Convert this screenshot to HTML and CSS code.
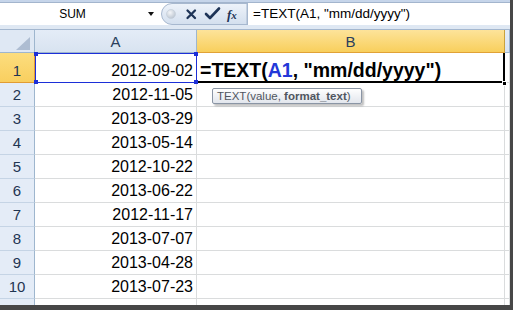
FILE: index.html
```html
<!DOCTYPE html>
<html>
<head>
<meta charset="utf-8">
<link rel="stylesheet" href="styles.css">
</head>
<body>
<div class="window">
  <div class="topstrip"></div>
  <div class="fbar">
    <div class="namebox"><span class="name">SUM</span><span class="arrow"></span></div>
    <div class="fbtns">
      <svg width="86" height="22" viewBox="0 0 86 22">
        <defs>
          <linearGradient id="bg" x1="0" y1="0" x2="0" y2="1">
            <stop offset="0" stop-color="#eef3fa"/>
            <stop offset="1" stop-color="#d3dfee"/>
          </linearGradient>
          <radialGradient id="dot" cx="0.4" cy="0.35" r="0.7">
            <stop offset="0" stop-color="#f4f6f9"/>
            <stop offset="1" stop-color="#b9c3cf"/>
          </radialGradient>
        </defs>
        <path d="M11 0.5 A10.5 10.5 0 0 0 11 21.5 L86 21.5 L86 0.5 Z" fill="url(#bg)" stroke="#a7b8cf" stroke-width="1"/>
        <circle cx="10" cy="11" r="4.5" fill="url(#dot)" stroke="#c3ccd8" stroke-width="0.6"/>
        <path d="M26.5 7.5 L34 15 M34 7.5 L26.5 15" stroke="#1e3457" stroke-width="2.3" stroke-linecap="round"/>
        <path d="M45 11 L49 15 L58 5.5" fill="none" stroke="#1e3457" stroke-width="2.6" stroke-linecap="round" stroke-linejoin="round"/>
        <text x="66" y="15.5" font-family="Liberation Serif, serif" font-style="italic" font-weight="bold" font-size="13" fill="#1e3457">f<tspan font-size="11">x</tspan></text>
      </svg>
    </div>
    <div class="finput">=TEXT(A1, "mm/dd/yyyy")</div>
  </div>
  <div class="gap"></div>
  <div class="sheet">
    <div class="corner"><span class="tri"></span></div>
    <div class="colhead">A</div>
    <div class="colhead sel">B</div>
    <div class="colhead"></div>

    <div class="rowhead sel">1</div>
    <div class="cell num">2012-09-02</div>
    <div class="cell edit">=TEXT(<span class="ref">A1</span>, "mm/dd/yyyy")</div>
    <div class="cell"></div>

    <div class="rowhead">2</div>
    <div class="cell num">2012-11-05</div>
    <div class="cell"></div>
    <div class="cell"></div>

    <div class="rowhead">3</div>
    <div class="cell num">2013-03-29</div>
    <div class="cell"></div>
    <div class="cell"></div>

    <div class="rowhead">4</div>
    <div class="cell num">2013-05-14</div>
    <div class="cell"></div>
    <div class="cell"></div>

    <div class="rowhead">5</div>
    <div class="cell num">2012-10-22</div>
    <div class="cell"></div>
    <div class="cell"></div>

    <div class="rowhead">6</div>
    <div class="cell num">2013-06-22</div>
    <div class="cell"></div>
    <div class="cell"></div>

    <div class="rowhead">7</div>
    <div class="cell num">2012-11-17</div>
    <div class="cell"></div>
    <div class="cell"></div>

    <div class="rowhead">8</div>
    <div class="cell num">2013-07-07</div>
    <div class="cell"></div>
    <div class="cell"></div>

    <div class="rowhead">9</div>
    <div class="cell num">2013-04-28</div>
    <div class="cell"></div>
    <div class="cell"></div>

    <div class="rowhead">10</div>
    <div class="cell num">2013-07-23</div>
    <div class="cell"></div>
    <div class="cell"></div>

    <div class="rowhead">11</div>
    <div class="cell num"></div>
    <div class="cell"></div>
    <div class="cell"></div>

    <div class="refbox">
      <span class="sq tl"></span><span class="sq tr"></span><span class="sq bl"></span><span class="sq br"></span>
    </div>
    <div class="handle"></div>
    <div class="tooltip">TEXT(value, <b>format_text</b>)</div>
  </div>
</div>
</body>
</html>
```

FILE: styles.css
```css
html, body {
  margin: 0;
  padding: 0;
}
body {
  background: #474747;
  width: 513px;
  height: 310px;
  overflow: hidden;
  font-family: "Liberation Sans", Arial, sans-serif;
}
.window {
  width: 510px;
  height: 305px;
  background: #ffffff;
  overflow: hidden;
  display: flex;
  flex-direction: column;
}
.topstrip {
  height: 2px;
  flex: 0 0 2px;
  background: #c6d5ea;
  border-bottom: 1px solid #a3b5cd;
}
.fbar {
  height: 22px;
  flex: 0 0 22px;
  display: flex;
  background: #dbe5f1;
}
.namebox {
  width: 161px;
  flex: 0 0 161px;
  background: #ffffff;
  display: flex;
  align-items: center;
}
.name {
  flex: 0 0 145px;
  text-align: center;
  font-size: 12px;
  color: #000;
}
.arrow {
  margin-left: 3px;
  width: 0;
  height: 0;
  border-left: 3.5px solid transparent;
  border-right: 3.5px solid transparent;
  border-top: 4px solid #111;
}
.fbtns {
  width: 86px;
  flex: 0 0 86px;
  background: #ffffff;
}
.fbtns svg {
  display: block;
}
.finput {
  flex: 1;
  background: #ffffff;
  border-left: 1px solid #a7b8cf;
  padding-left: 5px;
  font-size: 13.5px;
  line-height: 22px;
  color: #000;
  white-space: nowrap;
}
.gap {
  height: 4px;
  flex: 0 0 4px;
  background: #dfe8f3;
  border-top: 0;
  border-bottom: 1px solid #a4b7cf;
}
.sheet {
  position: relative;
  display: grid;
  grid-template-columns: 35px 162px 308px 5px;
  grid-template-rows: 23px 30px repeat(10, 24px);
}
.sheet > div {
  box-sizing: border-box;
}
.corner {
  background: #dfe8f4;
  border-right: 1px solid #9eb6ce;
  border-bottom: 1px solid #9eb6ce;
  display: flex;
  justify-content: flex-end;
  align-items: flex-end;
  padding: 0 4px 2px 0;
}
.tri {
  width: 0;
  height: 0;
  border-left: 14px solid transparent;
  border-bottom: 13px solid #aebdd2;
}
.colhead {
  background: linear-gradient(#e4ecf7, #d8e3f0);
  border-right: 1px solid #9eb6ce;
  border-bottom: 1px solid #9eb6ce;
  display: flex;
  align-items: center;
  justify-content: center;
  font-size: 15px;
  color: #2a3f5c;
}
.colhead.sel {
  background: linear-gradient(#fde39a, #f8cf5c);
  border-right: 1px solid #c9a23e;
  border-bottom: 1px solid #e1a236;
  color: #2a3f5c;
}
.rowhead {
  background: #e4ecf7;
  border-right: 1px solid #9eb6ce;
  border-bottom: 1px solid #c5d4e5;
  display: flex;
  align-items: flex-end;
  justify-content: center;
  padding-bottom: 2px;
  font-size: 15px;
  line-height: 18px;
  color: #1f3552;
}
.rowhead.sel {
  background: linear-gradient(#fcdd7e, #f9cf5f);
  border-right: 1px solid #e19c33;
  border-bottom: 1px solid #e19c33;
}
.cell {
  border-right: 1px solid #dadcdd;
  border-bottom: 1px solid #dadcdd;
  display: flex;
  align-items: flex-end;
  padding-bottom: 2px;
  font-size: 16px;
  line-height: 18px;
  color: #000;
  white-space: nowrap;
}
.cell.num {
  justify-content: flex-end;
  padding-right: 3px;
}
.cell.edit {
  border-left: 1px solid #e8dc12;
  border-right: 2px solid #000;
  border-bottom: 2px solid #000;
  padding-left: 3px;
  padding-bottom: 0;
  font-size: 19.5px;
  font-weight: bold;
  line-height: 22px;
  margin-left: -1px;
}
.ref {
  color: #2338d8;
}
.refbox {
  position: absolute;
  left: 35px;
  top: 23px;
  width: 162px;
  height: 30px;
  box-sizing: border-box;
  border: 1px solid #1c2fd8;
  pointer-events: none;
}
.sq {
  position: absolute;
  width: 4px;
  height: 4px;
  background: #1c2fd8;
}
.sq.tl { left: -2px; top: -2px; }
.sq.tr { right: -2px; top: -2px; }
.sq.bl { left: -2px; bottom: -2px; }
.sq.br { right: -2px; bottom: -2px; }
.handle {
  position: absolute;
  left: 502px;
  top: 51px;
  width: 5px;
  height: 5px;
  background: #000;
  border: 1px solid #fff;
  box-sizing: border-box;
}
.tooltip {
  position: absolute;
  left: 212px;
  top: 58px;
  width: 150px;
  height: 16px;
  box-sizing: border-box;
  background: linear-gradient(#fefefe, #e2e6ed);
  border: 1px solid #8a95a5;
  border-radius: 2px;
  box-shadow: 2px 2px 2px rgba(0, 0, 0, 0.25);
  font-size: 11.5px;
  line-height: 14px;
  color: #505660;
  padding-left: 4px;
  white-space: nowrap;
}
.tooltip b {
  font-weight: bold;
  color: #505660;
}
```
